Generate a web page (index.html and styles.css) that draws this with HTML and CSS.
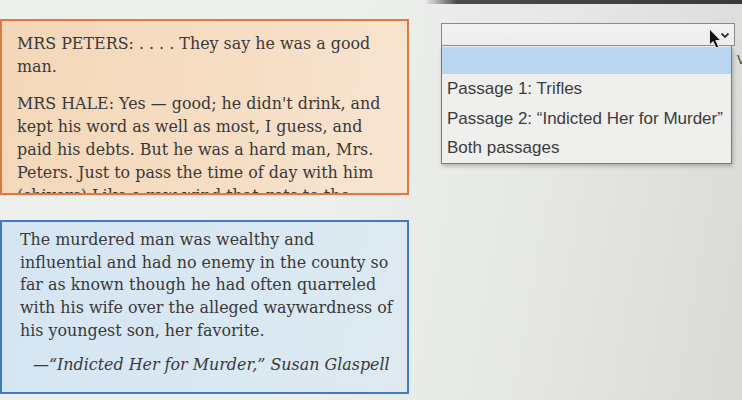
FILE: index.html
```html
<!DOCTYPE html>
<html>
<head>
<meta charset="utf-8">
<link rel="stylesheet" href="styles.css">
</head>
<body>
<div class="topstrip"></div>
<div class="page">
  <div class="passages">
    <div class="box box-orange">
      <p>MRS PETERS: . . . . They say he was a good man.</p>
      <p>MRS HALE: Yes — good; he didn't drink, and kept his word as well as most, I guess, and paid his debts. But he was a hard man, Mrs. Peters. Just to pass the time of day with him (shivers) Like a raw wind that gets to the bone.</p>
    </div>
    <div class="box box-blue">
      <p>The murdered man was wealthy and influential and had no enemy in the county so far as known though he had often quarreled with his wife over the alleged waywardness of his youngest son, her favorite.</p>
      <p class="cite">—“Indicted Her for Murder,” Susan Glaspell</p>
    </div>
  </div>
  <div class="question">
    <div class="dropdown">
      <div class="select">
        <svg class="cursor" width="16" height="21" viewBox="0 0 16 21"><path d="M1.5 1 L1.5 17 L5 13.5 L8 20 L10.8 18.8 L7.8 12.5 L12.8 12.5 Z" fill="#111" stroke="#e8e8e8" stroke-width="1"/></svg>
        <svg class="chev" width="10" height="7" viewBox="0 0 10 7"><path d="M1.5 1.5 L5 5 L8.5 1.5" fill="none" stroke="#333" stroke-width="1.8"/></svg>
      </div>
      <ul class="listbox">
        <li class="opt opt-empty"></li>
        <li class="opt">Passage 1: Trifles</li>
        <li class="opt">Passage 2: “Indicted Her for Murder”</li>
        <li class="opt">Both passages</li>
      </ul>
    </div>
    <span class="peek">vi</span>
  </div>
</div>
</body>
</html>
```
FILE: styles.css
```css
html, body {
  margin: 0;
  padding: 0;
}
body {
  width: 742px;
  height: 400px;
  overflow: hidden;
  background: linear-gradient(100deg, #eef0ee 0%, #edefec 45%, #e6e8e5 70%, #d9dad7 100%);
  font-family: "DejaVu Serif", serif;
  color: #3a3838;
}
.topstrip {
  height: 4px;
  margin-left: 425px;
  background: linear-gradient(90deg, rgba(60,60,62,0) 0%, #4a4a4e 10%, #3a3a3e 100%);
}
.page {
  display: flex;
  padding-top: 15px;
  gap: 32px;
}
.passages {
  flex: 0 0 409px;
  width: 409px;
  display: flex;
  flex-direction: column;
  gap: 25px;
}
.box {
  box-sizing: border-box;
  overflow: hidden;
  font-size: 15.9px;
  line-height: 23px;
}
.box p {
  margin: 0;
}
.box-orange {
  height: 176px;
  border: 2px solid #e2783c;
  background: linear-gradient(100deg, #f4d7b8 0%, #f6dec5 60%, #f8e5d1 100%);
  padding: 11px 15px 0 15px;
}
.box-orange p + p {
  margin-top: 14px;
}
.box-blue {
  height: 174px;
  border: 2px solid #3e7dbd;
  background: linear-gradient(100deg, #d5e5f3 0%, #d9e8f2 60%, #dfeaf0 100%);
  padding: 7px 11px 0 18px;
  line-height: 22.7px;
}
.box-blue .cite {
  margin-top: 11px;
  padding-left: 13px;
  font-style: italic;
  white-space: nowrap;
}
.question {
  display: flex;
  align-items: flex-start;
  padding-top: 4px;
  flex: 0 0 auto;
}
.dropdown {
  flex: 0 0 294px;
  width: 294px;
  position: relative;
}
.select {
  box-sizing: border-box;
  height: 23px;
  border: 1px solid #8a8a8a;
  background: linear-gradient(#f3f3f2, #ecedec);
  position: relative;
}
.cursor {
  position: absolute;
  left: 266px;
  top: 4px;
}
.chev {
  position: absolute;
  right: 4px;
  top: 8px;
}
.listbox {
  list-style: none;
  margin: 0;
  padding: 1px 0 0;
  box-sizing: border-box;
  width: 291px;
  height: 118px;
  border: 1px solid #7a7a7a;
  border-top: none;
  background: #efefee;
  box-shadow: 1px 2px 4px rgba(0,0,0,0.25);
  font-family: "Liberation Sans", Arial, sans-serif;
  font-size: 17px;
  color: #3c3c3c;
}
.opt {
  height: 29.5px;
  line-height: 30px;
  padding-left: 5px;
  white-space: nowrap;
}
.opt-empty {
  height: 27px;
  background: #b9d5ef;
}
.peek {
  margin-left: 2px;
  margin-top: 26px;
  font-family: "Liberation Sans", Arial, sans-serif;
  font-size: 17px;
  color: #555;
}
```
